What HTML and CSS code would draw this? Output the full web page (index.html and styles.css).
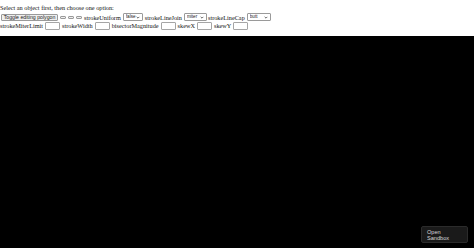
FILE: index.html
```html
<!DOCTYPE html>
<html lang="en">
<head>
    <meta charset="UTF-8">
    <meta name="viewport" content="width=device-width, initial-scale=1.0">
    <title>Polygon editing</title>
    <link rel="stylesheet" href="styles.css">
</head>
<body>

    <div class="toolbar">
        <div class="hint">Select an object first, then choose one option:</div>
        <div class="row first">
            <button class="btn toggle">Toggle editing polygon</button>
            <button class="btn empty"></button>
            <button class="btn empty"></button>
            <button class="btn empty"></button>
            <span>strokeUniform</span>
            <select class="pick w-false">
                <option>false</option>
                <option>true</option>
            </select>
            <span>strokeLineJoin</span>
            <select class="pick w-miter">
                <option>miter</option>
                <option>round</option>
                <option>bevel</option>
            </select>
            <span class="tight">strokeLineCap</span>
            <select class="pick w-butt">
                <option>butt</option>
                <option>round</option>
                <option>square</option>
            </select>
        </div>
        <div class="row second">
            <span>strokeMiterLimit</span> <input type="text" class="num">
            <span>strokeWidth</span> <input type="text" class="num">
            <span>bisectorMagnitude</span> <input type="text" class="num">
            <span>skewX</span> <input type="text" class="num">
            <span>skewY</span> <input type="text" class="num">
        </div>
    </div>

    <div class="stage"></div>

    <a class="sandbox-link" href="#">Open<br>Sandbox</a>

</body>
</html>
```

FILE: styles.css
```css
body{
    margin: 0;
    background: #fff;
    overflow: hidden;
    font-family: "Liberation Serif", serif;
    font-size: 6.25px;
    color: #111;
}

.hint{
    padding-top: 4px;
    line-height: 8px;
}

.row{
    display: flex;
    align-items: center;
    gap: 2px;
    white-space: nowrap;
}
.row.first{
    margin-top: 1px;
    height: 8px;
}
.row.second{
    height: 9px;
}
.row .tight{
    margin-left: -1px;
}

/* controls, shrunk down like the rest of the shot */
.btn{
    box-sizing: border-box;
    margin: 0;
    padding: 0;
    background: #efefef;
    border: 1px solid #9a9a9a;
    border-radius: 1px;
    font-family: "Liberation Sans", sans-serif;
    font-size: 5.2px;
    color: #222;
}
.btn.toggle{
    width: 57px;
    height: 7px;
    line-height: 5px;
    margin-left: 1px;
}
.btn.empty{
    width: 6px;
    height: 3px;
}

.pick{
    -webkit-appearance: none;
    appearance: none;
    box-sizing: border-box;
    margin: 0;
    height: 8px;
    padding: 0 0 0 2px;
    border: 1px solid #9a9a9a;
    border-radius: 1px;
    background: #fff url("data:image/svg+xml;utf8,<svg xmlns='http://www.w3.org/2000/svg' width='6' height='4' viewBox='0 0 6 4'><path d='M1 1l2 2 2-2' fill='none' stroke='%23333' stroke-width='1.1'/></svg>") no-repeat right 2px center / 4px 3px;
    font-family: "Liberation Sans", sans-serif;
    font-size: 4.6px;
    line-height: 6px;
    color: #222;
}
.w-false{ width: 20px; }
.w-miter{ width: 23px; }
.w-butt{ width: 24px; }

.num{
    box-sizing: border-box;
    width: 15px;
    height: 8px;
    margin: 0;
    padding: 0;
    border: 1px solid #a5a5a5;
    border-radius: 1px;
    background: #fff;
}

.stage{
    margin-top: 6px;
    height: 212px;
    background: #000;
}

.sandbox-link{
    position: fixed;
    right: 6px;
    bottom: 5px;
    box-sizing: border-box;
    width: 47px;
    height: 17px;
    padding: 2px 5px 0;
    background: #1a1a1a;
    border: 1px solid #2b2b2b;
    border-radius: 2px;
    color: #d8d8d8;
    font-family: "Liberation Sans", sans-serif;
    font-size: 5.6px;
    line-height: 6px;
    text-decoration: none;
}
```
